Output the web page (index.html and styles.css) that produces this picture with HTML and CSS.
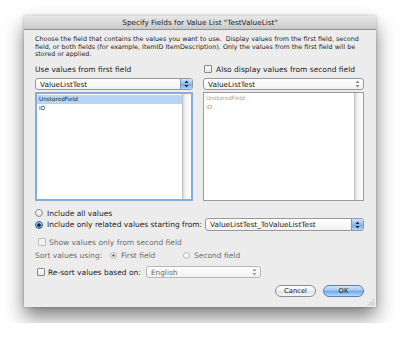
FILE: index.html
```html
<!DOCTYPE html>
<html lang="en">
<head>
    <meta charset="UTF-8">
    <title>Specify Fields for Value List</title>
    <link rel="stylesheet" href="styles.css">
</head>
<body>
    <div class="window">
        <div class="titlebar">Specify Fields for Value List "TestValueList"</div>
        <div class="content">
            <p class="desc">Choose the field that contains the values you want to use.&nbsp; Display values from the first field, second<br>field, or both fields (for example, ItemID ItemDescription). Only the values from the first field will be<br>stored or applied.</p>

            <div class="columns">
                <div class="col">
                    <div class="col-head">Use values from first field</div>
                    <div class="popup">
                        <span class="val">ValueListTest</span>
                        <span class="stepper blue"><svg width="5" height="8" viewBox="0 0 5 8"><path d="M2.5 0.5 L4.5 3 L0.5 3 Z M2.5 7.5 L4.5 5 L0.5 5 Z" fill="#1c2a3c"/></svg></span>
                    </div>
                    <div class="list focus">
                        <div class="items">
                            <div class="item sel">UnstoredField</div>
                            <div class="item">ID</div>
                        </div>
                        <div class="scroll"></div>
                    </div>
                </div>
                <div class="col">
                    <div class="col-head"><span class="check"></span>Also display values from second field</div>
                    <div class="popup">
                        <span class="val">ValueListTest</span>
                        <span class="stepper"><svg width="5" height="8" viewBox="0 0 5 8"><path d="M2.5 0.5 L4.5 3 L0.5 3 Z M2.5 7.5 L4.5 5 L0.5 5 Z" fill="#8a8a8a"/></svg></span>
                    </div>
                    <div class="list">
                        <div class="items dim">
                            <div class="item">UnstoredField</div>
                            <div class="item">ID</div>
                        </div>
                        <div class="scroll"></div>
                    </div>
                </div>
            </div>

            <div class="options">
                <div class="row r1"><span class="radio"></span>Include all values</div>
                <div class="row r2">
                    <span class="radio on"></span>Include only related values starting from:
                    <div class="popup related">
                        <span class="val">ValueListTest_ToValueListTest</span>
                        <span class="stepper blue"><svg width="5" height="8" viewBox="0 0 5 8"><path d="M2.5 0.5 L4.5 3 L0.5 3 Z M2.5 7.5 L4.5 5 L0.5 5 Z" fill="#1c2a3c"/></svg></span>
                    </div>
                </div>
                <div class="row r3 off"><span class="check dis"></span>Show values only from second field</div>
                <div class="row r4 off">
                    <span class="sort-label">Sort values using:</span>
                    <span class="sort-opt first"><span class="radio small dot"></span>First field</span>
                    <span class="sort-opt"><span class="radio small"></span>Second field</span>
                </div>
                <div class="row r5">
                    <span class="check"></span><span class="resort-label">Re-sort values based on:</span>
                    <div class="popup lang">
                        <span class="val">English</span>
                        <span class="stepper"><svg width="5" height="8" viewBox="0 0 5 8"><path d="M2.5 0.5 L4.5 3 L0.5 3 Z M2.5 7.5 L4.5 5 L0.5 5 Z" fill="#9a9a9a"/></svg></span>
                    </div>
                </div>
            </div>

            <div class="buttons">
                <button class="btn">Cancel</button>
                <button class="btn ok">OK</button>
            </div>
        </div>
        <svg class="grip" width="8" height="8" viewBox="0 0 8 8"><path d="M7.5 1 L1 7.5 M7.5 4 L4 7.5 M7.5 6.5 L6.5 7.5" stroke="#a8a8a8" stroke-width="0.8"/></svg>
    </div>
</body>
</html>
```

FILE: styles.css
```css
* { margin: 0; padding: 0; box-sizing: border-box; }
body { background: #fff; padding: 16px 24px; font-family: "DejaVu Sans", sans-serif; color: #1c1c1c; }

/* Window frame */
.window { position: relative; width: 352px; background: #ececec; box-shadow: 0 10px 18px rgba(0, 0, 0, 0.5), 0 0 3px rgba(0, 0, 0, 0.25); }
.titlebar { height: 14px; line-height: 13px; text-align: center; font-size: 7.3px; color: #262626; background: linear-gradient(#e8e8e8, #cacaca); border-bottom: 1px solid #909090; }
.content { padding: 6px 12px 10px 11px; }
.desc { font-size: 6.4px; line-height: 7.5px; margin-bottom: 4.5px; color: #1e1e1e; white-space: nowrap; }
.grip { position: absolute; right: 1px; bottom: 1px; }

/* Field columns */
.columns { display: grid; grid-template-columns: 158px 1fr; column-gap: 10px; }
.col-head { display: flex; align-items: center; height: 12px; font-size: 7.5px; }
.col-head .check { margin-left: 1px; margin-right: 4px; }

.popup { display: flex; align-items: center; height: 12px; margin-top: 3px; border: 1px solid #999; border-radius: 3px; background: linear-gradient(#fff, #f1f1f1); font-size: 7.3px; overflow: hidden; }
.popup .val { flex: 1; padding-left: 4px; white-space: nowrap; }
.popup .stepper { width: 12px; height: 100%; display: flex; align-items: center; justify-content: center; }
.popup .stepper.blue { background: linear-gradient(#cfe4f9, #8dbcec 50%, #6fa8e6 51%, #b4d6f5); border-left: 1px solid #7a9ac4; }

.list { display: flex; height: 109px; margin-top: 2px; background: #fff; border: 1px solid #9b9b9b; }
.list.focus { border: 2px solid #86acdc; }
.items { flex: 1; padding-top: 1px; font-size: 5.7px; }
.item { height: 9px; line-height: 9px; padding-left: 2px; }
.item.sel { background: #b8d4f2; }
.items.dim { color: #a0a0a0; }
.scroll { width: 9px; background: linear-gradient(90deg, #d8d8d8, #f6f6f6 35%, #fbfbfb); border-left: 1px solid #c4c4c4; }

/* Options */
.options { margin-top: 7px; font-size: 7.5px; }
.row { display: flex; align-items: center; white-space: nowrap; }
.row.off { color: #6c6c6c; }
.r1 { height: 10px; }
.r2 { height: 13px; }
.r3 { height: 10px; margin-top: 6px; padding-left: 3px; }
.r4 { height: 10px; margin-top: 3px; }
.r5 { height: 12px; margin-top: 6px; padding-left: 2px; }

.radio { display: inline-block; flex: none; width: 8px; height: 8px; margin-right: 4px; border-radius: 50%; border: 1px solid #8a8a8a; background: linear-gradient(#fff, #e2e2e2); }
.radio.on { border-color: #41648f; background: radial-gradient(circle, #13243a 0 1.4px, transparent 1.9px), linear-gradient(#b4d5f5, #4e91dc); }
.radio.small { width: 7px; height: 7px; border-color: #b4b4b4; background: #f6f6f6; }
.radio.dot { background: radial-gradient(circle, #777 0 1px, transparent 1.5px), #f6f6f6; }

.check { display: inline-block; flex: none; width: 8px; height: 8px; margin-right: 3px; border: 1px solid #888; border-radius: 1px; background: linear-gradient(#fff, #e6e6e6); }
.check.dis { border-color: #bdbdbd; background: #f3f3f3; }

.popup.related { width: 159px; margin: 0 0 0 auto; height: 13px; }
.resort-label { width: 98px; }
.popup.lang { width: 115px; margin: 0; border-color: #b8b8b8; color: #6a6a6a; }

.sort-label { width: 75px; }
.sort-opt { display: flex; align-items: center; }
.sort-opt.first { width: 73px; }

/* Buttons */
.buttons { display: flex; justify-content: flex-end; gap: 7px; margin-top: 7px; }
.btn { width: 41px; height: 12px; border-radius: 6px; border: 1px solid #8d8d8d; background: linear-gradient(#fff, #f0f0f0 50%, #e2e2e2 51%, #f4f4f4); font-family: "DejaVu Sans", sans-serif; font-size: 6.8px; color: #1c1c1c; }
.btn.ok { border-color: #5a7fb5; background: linear-gradient(#d6e8fa, #93c1ef 50%, #6aa5e6 51%, #b8dbf8); }
```
